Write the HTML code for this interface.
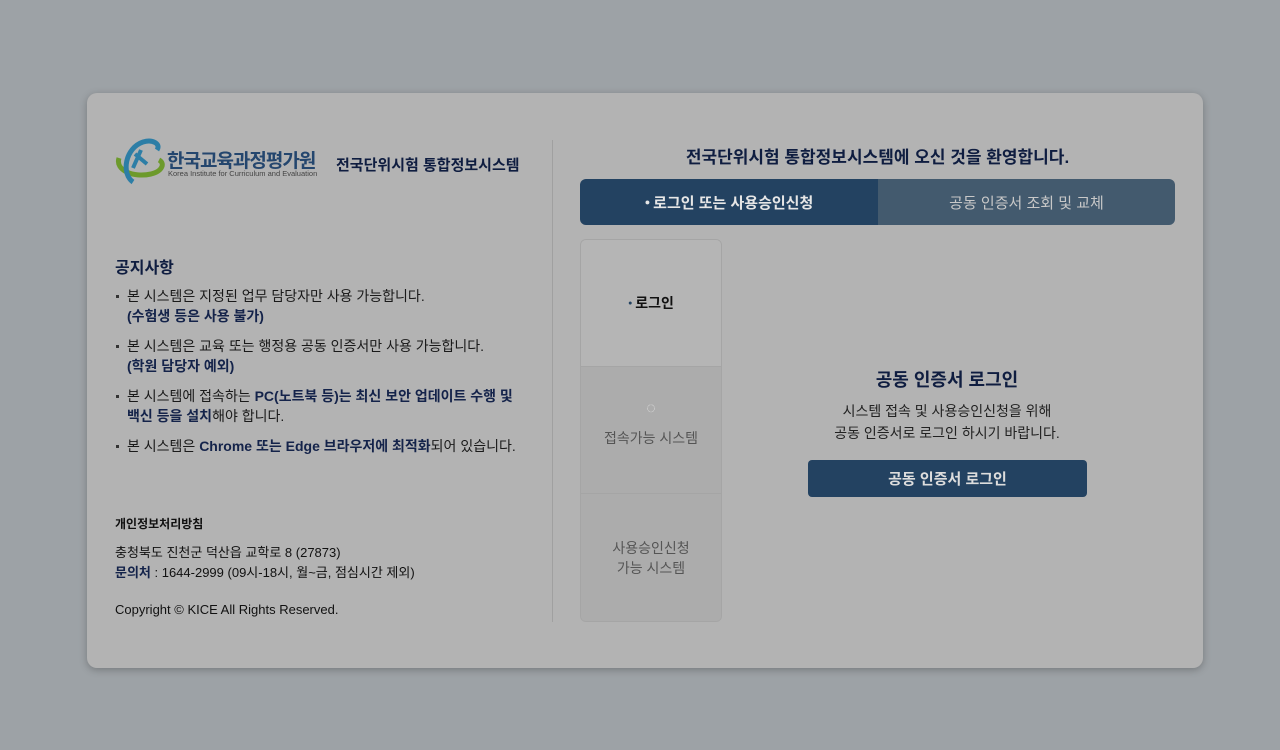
<!DOCTYPE html>
<html><head><meta charset="utf-8"><style>
*{margin:0;padding:0;box-sizing:border-box}
body{width:1280px;height:750px;background:#9da2a6;font-family:"Liberation Sans","Noto Sans CJK KR",sans-serif;position:relative;overflow:hidden;color:#111}
.card{position:absolute;left:87px;top:93px;width:1116px;height:575px;background:#b3b3b3;border-radius:10px;box-shadow:0 2px 8px rgba(0,0,0,.25)}
.abs{position:absolute}
.navy{color:#0f1d40}
.vline{position:absolute;left:552px;top:140px;width:1px;height:482px;background:#a0a0a0}
ul{list-style:none}
li{position:relative;padding-left:12px;font-size:14px;line-height:20px;margin-bottom:10px;color:#1a1a1a}
li:before{content:"";position:absolute;left:1px;top:9px;width:3px;height:3px;background:#333}
b.n{color:#14234a;font-weight:bold}
.tabs{position:absolute;left:580px;top:179px;width:595px;height:46px;border-radius:6px;overflow:hidden;display:flex}
.tabs div{display:flex;align-items:center;justify-content:center;font-size:15px}
.side{position:absolute;left:580px;top:239px;width:142px;height:383px;border:1px solid #a5a5a5;border-radius:6px;overflow:hidden}
.side div{height:127px;border-bottom:1px solid #a5a5a5;display:flex;align-items:center;justify-content:center;text-align:center;font-size:14px;color:#555}
sup{font-size:9px;vertical-align:8px;margin-right:3px}
</style></head><body>
<div class="card"></div>
<svg class="abs" style="left:113px;top:138px" width="52" height="50" viewBox="0 0 52 50">
<path d="M6 20 C2 32 20 40 38 36 C50 33 52 25 46 22" fill="none" stroke="#6d9a2c" stroke-width="5"/>
<path d="M20 44 C8 36 12 10 30 4 C40 1 48 6 44 12" fill="none" stroke="#2d7ea6" stroke-width="5"/>
<path d="M22 16 L34 26 M28 12 L20 30" stroke="#2d7ea6" stroke-width="4"/>
</svg>
<div class="abs" style="left:167px;top:146px;font-size:19px;font-weight:bold;color:#24466e;letter-spacing:-1px">한국교육과정평가원</div>
<div class="abs" style="left:168px;top:169px;font-size:7.5px;color:#444">Korea Institute for Curriculum and Evaluation</div>
<div class="abs navy" style="left:336px;top:154px;font-size:15px;font-weight:bold">전국단위시험 통합정보시스템</div>
<div class="abs navy" style="left:115px;top:254px;font-size:16px;font-weight:bold">공지사항</div>
<ul class="abs" style="left:115px;top:286px;width:410px">
<li>본 시스템은 지정된 업무 담당자만 사용 가능합니다.<br><b class="n">(수험생 등은 사용 불가)</b></li>
<li>본 시스템은 교육 또는 행정용 공동 인증서만 사용 가능합니다.<br><b class="n">(학원 담당자 예외)</b></li>
<li>본 시스템에 접속하는 <b class="n">PC(노트북 등)는 최신 보안 업데이트 수행 및<br>백신 등을 설치</b>해야 합니다.</li>
<li>본 시스템은 <b class="n">Chrome 또는 Edge 브라우저에 최적화</b>되어 있습니다.</li>
</ul>
<div class="abs" style="left:115px;top:515px;font-size:12px;font-weight:bold">개인정보처리방침</div>
<div class="abs" style="left:115px;top:543px;font-size:13px;line-height:20px">충청북도 진천군 덕산읍 교학로 8 (27873)<br><b class="n">문의처</b> : 1644-2999 (09시-18시, 월~금, 점심시간 제외)</div>
<div class="abs" style="left:115px;top:602px;font-size:13px">Copyright © KICE All Rights Reserved.</div>
<div class="vline"></div>
<div class="abs navy" style="left:580px;top:143px;width:595px;text-align:center;font-size:17px;font-weight:bold">전국단위시험 통합정보시스템에 오신 것을 환영합니다.</div>
<div class="tabs"><div style="width:298px;background:#234261;color:#e6e6e6;font-weight:bold"><sup>●</sup>로그인 또는 사용승인신청</div><div style="flex:1;background:#435a6e;color:#c8c8c8">공동 인증서 조회 및 교체</div></div>
<div class="side">
<div style="background:#b5b5b5;color:#111;font-weight:bold"><sup style="color:#234261;font-size:7px">●</sup>로그인</div>
<div style="background:#acacac;flex-direction:column;gap:10px;padding-bottom:12px"><span style="color:#ddd;font-size:16px;font-weight:bold">◌</span>접속가능 시스템</div>
<div style="background:#acacac;border:0">사용승인신청<br>가능 시스템</div>
</div>
<div class="abs navy" style="left:722px;top:366px;width:450px;text-align:center;font-size:18px;font-weight:bold">공동 인증서 로그인</div>
<div class="abs" style="left:722px;top:400px;width:450px;text-align:center;font-size:14px;line-height:22px;color:#222">시스템 접속 및 사용승인신청을 위해<br>공동 인증서로 로그인 하시기 바랍니다.</div>
<div class="abs" style="left:808px;top:460px;width:279px;height:37px;background:#234261;border-radius:4px;color:#ddd;font-size:15px;font-weight:bold;display:flex;align-items:center;justify-content:center">공동 인증서 로그인</div>
</body></html>
